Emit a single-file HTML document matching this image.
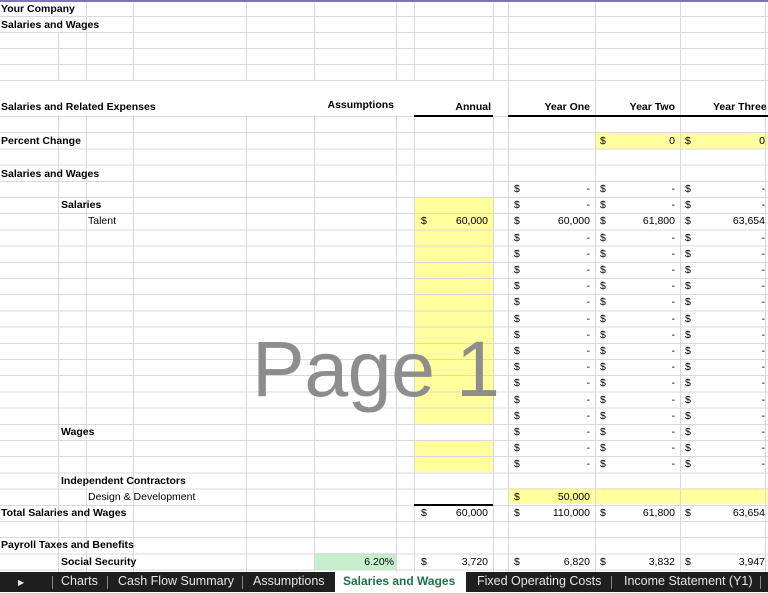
<!DOCTYPE html>
<html><head><meta charset="utf-8"><style>
*{margin:0;padding:0;box-sizing:border-box}
body{width:768px;height:592px;overflow:hidden;background:#fff;position:relative;font-family:"Liberation Sans",sans-serif;font-size:10.5px;color:#000}
.abs{position:absolute}
.vl{position:absolute;top:0;height:572px;width:1px;background:#d9d9d9}
.hl{position:absolute;left:0;width:768px;height:1px;background:#d9d9d9}
.y{position:absolute;background:#ffff9c}
.r{position:absolute;left:0;width:768px;height:16px;line-height:16px}
.r span{position:absolute;top:0;white-space:nowrap}
.bd{font-weight:bold}
.a{left:514px}.b{right:178px}.c{left:600px}.d{right:93px}.e{left:685px}.f{right:3px}
.ad{left:421px}.av{right:280px}
.tab{position:absolute;top:572px;height:20px;line-height:19px;font-size:12.5px;color:#e6e6e6;white-space:nowrap}
.sep{position:absolute;top:576px;width:1px;height:13px;background:#888}
</style></head><body>

<!-- fills -->
<div class="y" style="left:595px;top:133px;width:173px;height:16px"></div>
<div class="y" style="left:414px;top:197px;width:79px;height:227px"></div>
<div class="y" style="left:414px;top:440px;width:79px;height:32px"></div>
<div class="y" style="left:508px;top:488px;width:260px;height:16px"></div>
<div class="abs" style="left:314px;top:553px;width:82px;height:17px;background:#c6efce"></div>

<!-- grid vertical -->
<div class="vl" style="left:58px"></div>
<div class="vl" style="left:86px"></div>
<div class="vl" style="left:133px"></div>
<div class="vl" style="left:246px"></div>
<div class="vl" style="left:314px"></div>
<div class="vl" style="left:396px"></div>
<div class="vl" style="left:414px"></div>
<div class="vl" style="left:493px"></div>
<div class="vl" style="left:508px"></div>
<div class="vl" style="left:595px"></div>
<div class="vl" style="left:680px"></div>
<div class="vl" style="left:765px"></div>
<div class="abs" style="left:0;top:81px;width:508px;height:34px;background:#fff"></div>
<div class="abs" style="left:0;top:2px;width:85px;height:30px;background:#fff"></div>

<!-- grid horizontal -->
<div class="hl" style="top:16px"></div><div class="hl" style="top:32px"></div><div class="hl" style="top:48px"></div><div class="hl" style="top:64px"></div><div class="hl" style="top:80px"></div>
<div class="abs" style="left:0;top:116px;width:768px;height:456px;background:repeating-linear-gradient(to bottom,#d9d9d9 0,#d9d9d9 1px,transparent 1px,transparent 16.2px)"></div>

<div class="abs" style="left:0;top:0;width:768px;height:2px;background:#7b74c2"></div>

<!-- watermark -->
<div class="abs" style="left:252px;top:324px;font-size:79px;line-height:90px;color:#8d8d8d;letter-spacing:-0.5px">Page 1</div>

<!-- header borders -->
<div class="abs" style="left:414px;top:115px;width:79px;height:2px;background:#000"></div>
<div class="abs" style="left:508px;top:115px;width:260px;height:2px;background:#000"></div>
<div class="abs" style="left:414px;top:504px;width:79px;height:1.5px;background:#000"></div>

<!-- text -->
<div class="r bd" style="top:1px"><span style="left:1px">Your Company</span></div>
<div class="r bd" style="top:17px"><span style="left:1px">Salaries and Wages</span></div>
<div class="r bd" style="top:99px"><span style="left:1px">Salaries and Related Expenses</span><span style="right:374px;top:-2px">Assumptions</span><span style="right:277px">Annual</span><span class="b">Year One</span><span class="d">Year Two</span><span style="left:713px">Year Three</span></div>
<div class="r" style="top:133px"><span class="bd" style="left:1px">Percent Change</span><span class="c">$</span><span class="d">0</span><span class="e">$</span><span class="f">0</span></div>
<div class="r bd" style="top:166px"><span style="left:1px">Salaries and Wages</span></div>

<div class="r" style="top:181px"><span class="a">$</span><span class="b">-</span><span class="c">$</span><span class="d">-</span><span class="e">$</span><span class="f">-</span></div>
<div class="r" style="top:197px"><span class="bd" style="left:61px">Salaries</span><span class="a">$</span><span class="b">-</span><span class="c">$</span><span class="d">-</span><span class="e">$</span><span class="f">-</span></div>
<div class="r" style="top:213px"><span style="left:88px">Talent</span><span class="ad">$</span><span class="av">60,000</span><span class="a">$</span><span class="b">60,000</span><span class="c">$</span><span class="d">61,800</span><span class="e">$</span><span class="f">63,654</span></div>
<div class="r" style="top:230px"><span class="a">$</span><span class="b">-</span><span class="c">$</span><span class="d">-</span><span class="e">$</span><span class="f">-</span></div>
<div class="r" style="top:246px"><span class="a">$</span><span class="b">-</span><span class="c">$</span><span class="d">-</span><span class="e">$</span><span class="f">-</span></div>
<div class="r" style="top:262px"><span class="a">$</span><span class="b">-</span><span class="c">$</span><span class="d">-</span><span class="e">$</span><span class="f">-</span></div>
<div class="r" style="top:278px"><span class="a">$</span><span class="b">-</span><span class="c">$</span><span class="d">-</span><span class="e">$</span><span class="f">-</span></div>
<div class="r" style="top:294px"><span class="a">$</span><span class="b">-</span><span class="c">$</span><span class="d">-</span><span class="e">$</span><span class="f">-</span></div>
<div class="r" style="top:311px"><span class="a">$</span><span class="b">-</span><span class="c">$</span><span class="d">-</span><span class="e">$</span><span class="f">-</span></div>
<div class="r" style="top:327px"><span class="a">$</span><span class="b">-</span><span class="c">$</span><span class="d">-</span><span class="e">$</span><span class="f">-</span></div>
<div class="r" style="top:343px"><span class="a">$</span><span class="b">-</span><span class="c">$</span><span class="d">-</span><span class="e">$</span><span class="f">-</span></div>
<div class="r" style="top:359px"><span class="a">$</span><span class="b">-</span><span class="c">$</span><span class="d">-</span><span class="e">$</span><span class="f">-</span></div>
<div class="r" style="top:375px"><span class="a">$</span><span class="b">-</span><span class="c">$</span><span class="d">-</span><span class="e">$</span><span class="f">-</span></div>
<div class="r" style="top:392px"><span class="a">$</span><span class="b">-</span><span class="c">$</span><span class="d">-</span><span class="e">$</span><span class="f">-</span></div>
<div class="r" style="top:408px"><span class="a">$</span><span class="b">-</span><span class="c">$</span><span class="d">-</span><span class="e">$</span><span class="f">-</span></div>
<div class="r" style="top:424px"><span class="bd" style="left:61px">Wages</span><span class="a">$</span><span class="b">-</span><span class="c">$</span><span class="d">-</span><span class="e">$</span><span class="f">-</span></div>
<div class="r" style="top:440px"><span class="a">$</span><span class="b">-</span><span class="c">$</span><span class="d">-</span><span class="e">$</span><span class="f">-</span></div>
<div class="r" style="top:456px"><span class="a">$</span><span class="b">-</span><span class="c">$</span><span class="d">-</span><span class="e">$</span><span class="f">-</span></div>
<div class="r" style="top:473px"><span class="bd" style="left:61px">Independent Contractors</span></div>
<div class="r" style="top:489px"><span style="left:88px">Design &amp; Development</span><span class="a">$</span><span class="b">50,000</span></div>
<div class="r" style="top:505px"><span class="bd" style="left:1px">Total Salaries and Wages</span><span class="ad">$</span><span class="av">60,000</span><span class="a">$</span><span class="b">110,000</span><span class="c">$</span><span class="d">61,800</span><span class="e">$</span><span class="f">63,654</span></div>
<div class="r bd" style="top:537px"><span style="left:1px">Payroll Taxes and Benefits</span></div>
<div class="r" style="top:554px"><span class="bd" style="left:61px">Social Security</span><span style="right:374px">6.20%</span><span class="ad">$</span><span class="av">3,720</span><span class="a">$</span><span class="b">6,820</span><span class="c">$</span><span class="d">3,832</span><span class="e">$</span><span class="f">3,947</span></div>

<!-- tab bar -->
<div class="abs" style="left:0;top:572px;width:768px;height:20px;background:#1f1f1f"></div>
<div class="tab" style="left:18px;font-size:8px;top:573px">&#9654;</div>
<div class="sep" style="left:52px"></div>
<div class="tab" style="left:61px">Charts</div>
<div class="sep" style="left:107px"></div>
<div class="tab" style="left:118px">Cash Flow Summary</div>
<div class="sep" style="left:242px"></div>
<div class="tab" style="left:253px">Assumptions</div>
<div class="abs" style="left:335px;top:572px;width:131px;height:20px;background:#fff"></div>
<div class="tab" style="left:343px;color:#217346;font-weight:bold;font-size:12px">Salaries and Wages</div>
<div class="tab" style="left:477px">Fixed Operating Costs</div>
<div class="sep" style="left:611px"></div>
<div class="tab" style="left:624px">Income Statement (Y1)</div>
<div class="sep" style="left:760px"></div>
</body></html>
